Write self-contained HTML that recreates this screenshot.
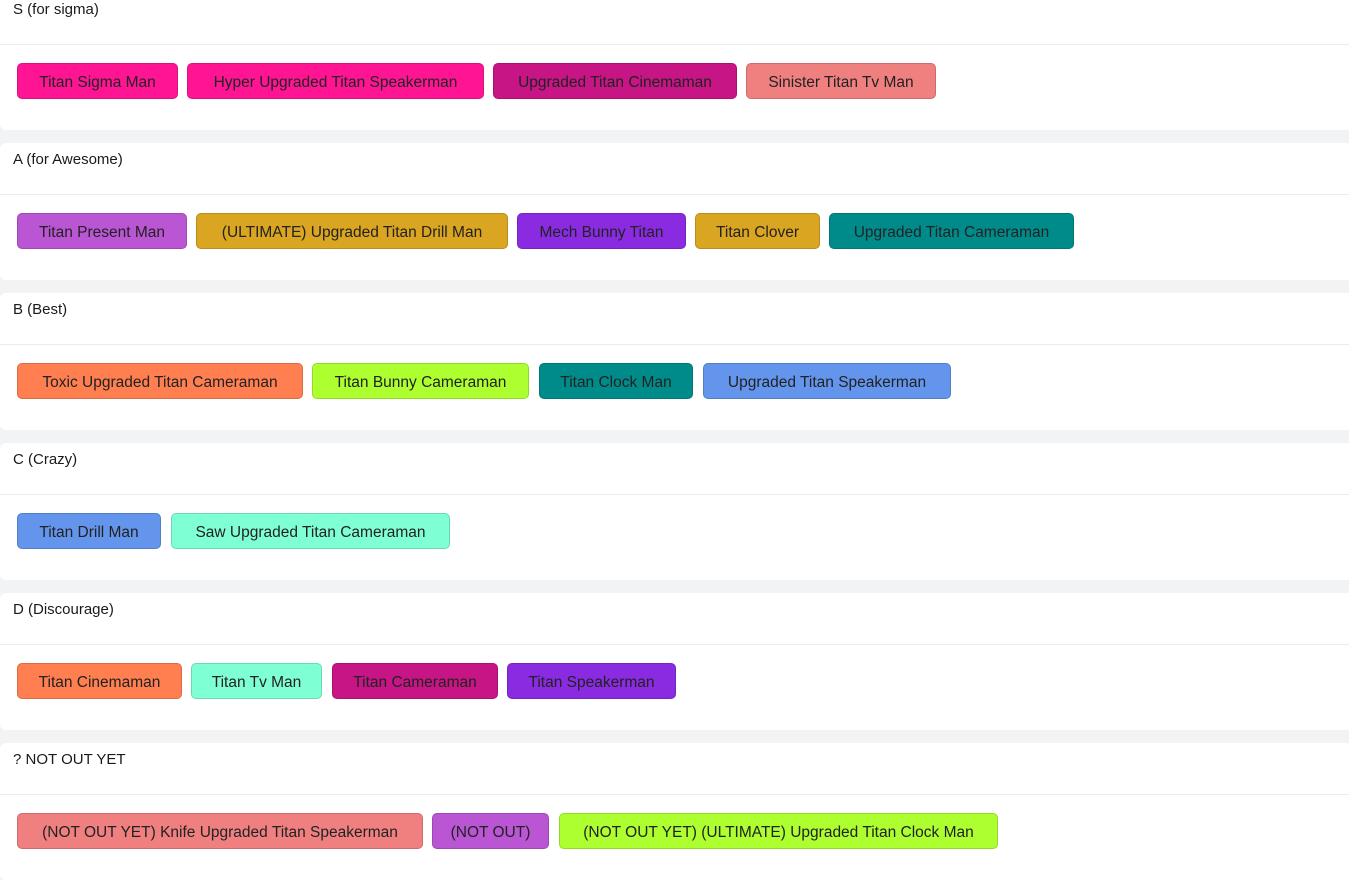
<!DOCTYPE html><html><head><style>
body{margin:0;background:#f2f3f5;width:1349px;height:852px;overflow:hidden;position:relative;font-family:"Liberation Sans",sans-serif;color:#212529}
.card{position:absolute;left:0;width:1360px;height:137px;background:#fff;border-radius:6px}
.h{position:absolute;left:13px;top:8px;font-size:15px;line-height:18px;color:#1a1a1a}
.d{position:absolute;left:0;right:0;top:51px;border-top:1px solid #e9ebee}
.b{position:absolute;top:70px;height:34px;border:1px solid rgba(0,0,0,.15);border-radius:5px;box-sizing:content-box;font-size:15.5px;line-height:37px;text-align:center;color:#222;white-space:nowrap;overflow:hidden}
</style></head><body>
<div class="card" style="top:-7px"><div class="h">S (for sigma)</div><div class="d"></div>
<div class="b" style="left:17px;width:159px;background:#ff1493">Titan Sigma Man</div>
<div class="b" style="left:187px;width:295px;background:#ff1493">Hyper Upgraded Titan Speakerman</div>
<div class="b" style="left:493px;width:242px;background:#c71585">Upgraded Titan Cinemaman</div>
<div class="b" style="left:746px;width:188px;background:#f08080">Sinister Titan Tv Man</div></div>
<div class="card" style="top:143px"><div class="h">A (for Awesome)</div><div class="d"></div>
<div class="b" style="left:17px;width:168px;background:#ba55d3">Titan Present Man</div>
<div class="b" style="left:196px;width:310px;background:#daa520">(ULTIMATE) Upgraded Titan Drill Man</div>
<div class="b" style="left:517px;width:167px;background:#8a2be2">Mech Bunny Titan</div>
<div class="b" style="left:695px;width:123px;background:#daa520">Titan Clover</div>
<div class="b" style="left:829px;width:243px;background:#008b8b">Upgraded Titan Cameraman</div></div>
<div class="card" style="top:293px"><div class="h">B (Best)</div><div class="d"></div>
<div class="b" style="left:17px;width:284px;background:#ff7f50">Toxic Upgraded Titan Cameraman</div>
<div class="b" style="left:312px;width:215px;background:#adff2f">Titan Bunny Cameraman</div>
<div class="b" style="left:539px;width:152px;background:#008b8b">Titan Clock Man</div>
<div class="b" style="left:703px;width:246px;background:#6495ed">Upgraded Titan Speakerman</div></div>
<div class="card" style="top:443px"><div class="h">C (Crazy)</div><div class="d"></div>
<div class="b" style="left:17px;width:142px;background:#6495ed">Titan Drill Man</div>
<div class="b" style="left:171px;width:277px;background:#7fffd4">Saw Upgraded Titan Cameraman</div></div>
<div class="card" style="top:593px"><div class="h">D (Discourage)</div><div class="d"></div>
<div class="b" style="left:17px;width:163px;background:#ff7f50">Titan Cinemaman</div>
<div class="b" style="left:191px;width:129px;background:#7fffd4">Titan Tv Man</div>
<div class="b" style="left:332px;width:164px;background:#c71585">Titan Cameraman</div>
<div class="b" style="left:507px;width:167px;background:#8a2be2">Titan Speakerman</div></div>
<div class="card" style="top:743px"><div class="h">? NOT OUT YET</div><div class="d"></div>
<div class="b" style="left:17px;width:404px;background:#f08080">(NOT OUT YET) Knife Upgraded Titan Speakerman</div>
<div class="b" style="left:432px;width:115px;background:#ba55d3">(NOT OUT)</div>
<div class="b" style="left:559px;width:437px;background:#adff2f">(NOT OUT YET) (ULTIMATE) Upgraded Titan Clock Man</div></div>
</body></html>
